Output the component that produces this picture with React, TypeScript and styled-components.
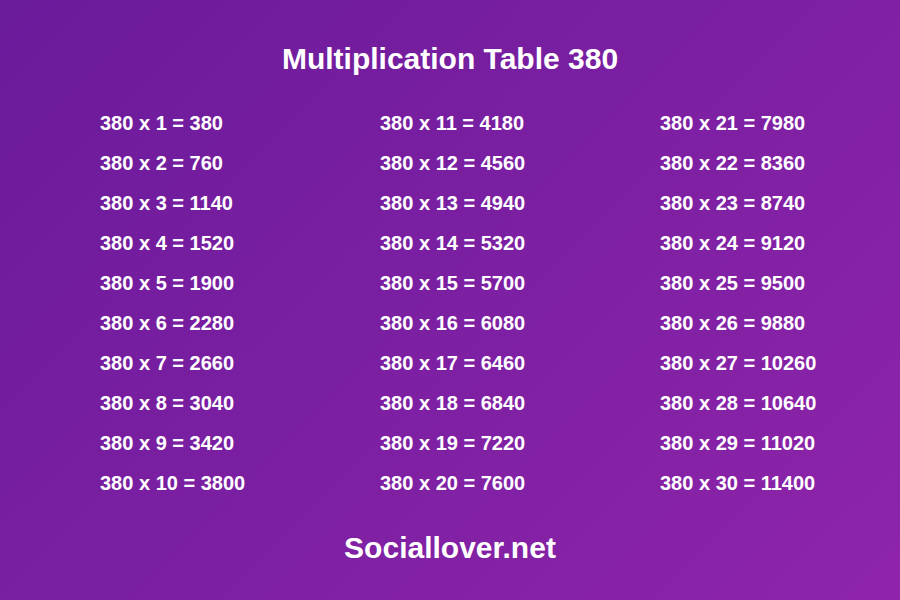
import React from "react";
import styled, { createGlobalStyle } from "styled-components";

const Global = createGlobalStyle`
  html, body { margin: 0; padding: 0; }
  body { font-family: "Liberation Sans", Arial, Helvetica, sans-serif; }
`;

const Page = styled.div`
  width: 900px;
  height: 600px;
  box-sizing: border-box;
  padding-top: 41px;
  background: linear-gradient(135deg, #6a1b9a 0%, #8e24aa 100%);
  color: #ffffff;
  display: flex;
  flex-direction: column;
  overflow: hidden;
`;

const Title = styled.h1`
  margin: 0;
  font-size: 30px;
  line-height: 36px;
  font-weight: 700;
  text-align: center;
`;

const Grid = styled.div`
  margin-top: 26px;
  padding-left: 100px;
  display: grid;
  grid-template-columns: repeat(3, 280px);
  grid-template-rows: repeat(10, 40px);
  grid-auto-flow: column;
`;

const Cell = styled.div`
  font-size: 20px;
  line-height: 40px;
  font-weight: 700;
  white-space: nowrap;
`;

const Footer = styled.div`
  margin-top: 27px;
  font-size: 30px;
  line-height: 36px;
  font-weight: 700;
  text-align: center;
`;

export default function App() {
  const n = 380;
  const items = Array.from({ length: 30 }, (_, i) => i + 1);
  return (
    <>
      <Global />
      <Page>
        <Title>Multiplication Table {n}</Title>
        <Grid>
          {items.map((i) => (
            <Cell key={i}>
              {n} x {i} = {n * i}
            </Cell>
          ))}
        </Grid>
        <Footer>Sociallover.net</Footer>
      </Page>
    </>
  );
}
